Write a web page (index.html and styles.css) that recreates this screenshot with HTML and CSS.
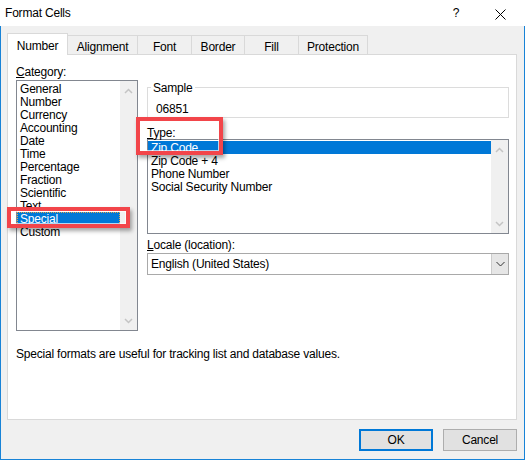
FILE: index.html
```html
<!DOCTYPE html>
<html>
<head>
<meta charset="utf-8">
<title>Format Cells</title>
<link rel="stylesheet" href="styles.css">
</head>
<body>
<div class="window">
  <div class="titlebar">
    <span class="title">Format Cells</span>
    <span class="ctrl help">?</span>
    <span class="ctrl close"><svg width="11" height="11" viewBox="0 0 11 11"><path d="M0.5 0.5 L10.5 10.5 M10.5 0.5 L0.5 10.5" stroke="#000" stroke-width="1" fill="none"/></svg></span>
  </div>
  <div class="body">
    <div class="tabs">
      <div class="tab active tab-number">Number</div>
      <div class="tab tab-alignment">Alignment</div>
      <div class="tab tab-font">Font</div>
      <div class="tab tab-border">Border</div>
      <div class="tab tab-fill">Fill</div>
      <div class="tab tab-protection">Protection</div>
    </div>
    <div class="panel">
      <div class="columns">
        <div class="col-left">
          <div class="label"><u>C</u>ategory:</div>
          <div class="listbox category-list">
            <div class="items">
              <div class="item">General</div>
              <div class="item">Number</div>
              <div class="item">Currency</div>
              <div class="item">Accounting</div>
              <div class="item">Date</div>
              <div class="item">Time</div>
              <div class="item">Percentage</div>
              <div class="item">Fraction</div>
              <div class="item">Scientific</div>
              <div class="item">Text</div>
              <div class="item selected focused">Special</div>
              <div class="item">Custom</div>
            </div>
            <div class="scrollbar">
              <span class="sb-btn"><svg width="9" height="6" viewBox="0 0 9 6"><path d="M1 5 L4.5 1.5 L8 5" stroke="#c4c4c4" stroke-width="1.5" fill="none"/></svg></span>
              <span class="sb-btn"><svg width="9" height="6" viewBox="0 0 9 6"><path d="M1 1 L4.5 4.5 L8 1" stroke="#c4c4c4" stroke-width="1.5" fill="none"/></svg></span>
            </div>
          </div>
        </div>
        <div class="col-right">
          <div class="groupbox">
            <div class="legend">Sample</div>
            <div class="sample-value">06851</div>
          </div>
          <div class="label type-label"><u>T</u>ype:</div>
          <div class="listbox type-list">
            <div class="items">
              <div class="item selected">Zip Code</div>
              <div class="item">Zip Code + 4</div>
              <div class="item">Phone Number</div>
              <div class="item">Social Security Number</div>
            </div>
            <div class="scrollbar">
              <span class="sb-btn"><svg width="9" height="6" viewBox="0 0 9 6"><path d="M1 5 L4.5 1.5 L8 5" stroke="#c4c4c4" stroke-width="1.5" fill="none"/></svg></span>
              <span class="sb-btn"><svg width="9" height="6" viewBox="0 0 9 6"><path d="M1 1 L4.5 4.5 L8 1" stroke="#c4c4c4" stroke-width="1.5" fill="none"/></svg></span>
            </div>
          </div>
          <div class="label locale-label"><u>L</u>ocale (location):</div>
          <div class="combo">
            <span class="combo-text">English (United States)</span>
            <span class="combo-btn"><svg width="9" height="6" viewBox="0 0 9 6"><path d="M0.5 1 L4.5 5 L8.5 1" stroke="#333" stroke-width="1" fill="none"/></svg></span>
          </div>
        </div>
      </div>
      <div class="desc">Special formats are useful for tracking list and database values.</div>
    </div>
    <div class="footer">
      <button class="btn btn-default">OK</button>
      <button class="btn">Cancel</button>
    </div>
  </div>
  <div class="callout callout-special"></div>
  <div class="callout callout-type"></div>
</div>
</body>
</html>
```

FILE: styles.css
```css
* { box-sizing: border-box; }
html, body { margin: 0; padding: 0; background: #fff; }
body {
  font-family: "Liberation Sans", Arial, sans-serif;
  font-size: 12px;
  letter-spacing: -0.2px;
  line-height: 13px;
  color: #000;
}
.window {
  position: relative;
  width: 525px;
  height: 460px;
  display: flex;
  flex-direction: column;
  overflow: hidden;
}
.titlebar {
  height: 26px;
  flex: none;
  display: flex;
  align-items: center;
  background: #fff;
  padding-right: 3px;
}
.title { padding-left: 5px; padding-top: 1px; }
.ctrl { width: 44px; display: flex; justify-content: center; }
.help { margin-left: auto; padding-top: 1px; }
.close svg { display: block; margin-top: 2px; }

.body {
  flex: 1;
  background: #f0f0f0;
  border: 1px solid #1883d7;
  border-top: none;
  padding: 7px 7px 8px 6px;
  display: flex;
  flex-direction: column;
}

.tabs {
  display: flex;
  align-items: flex-end;
  height: 21px;
  flex: none;
}
.tab {
  height: 19px;
  border-top: 1px solid #d9d9d9;
  border-right: 1px solid #d9d9d9;
  background: #f0f0f0;
  text-align: center;
  padding-top: 5px;
}
.tab.active {
  position: relative;
  z-index: 1;
  height: 22px;
  margin-bottom: -1px;
  background: #fff;
  border-left: 1px solid #d9d9d9;
  padding-top: 6px;
}
.tab-number { width: 61px; }
.tab-alignment { width: 70px; }
.tab-font { width: 54px; }
.tab-border { width: 53px; }
.tab-fill { width: 54px; }
.tab-protection { width: 69px; }

.panel {
  flex: none;
  height: 366px;
  background: #fff;
  border: 1px solid #d9d9d9;
  padding: 10px 7px 0 8px;
}
.columns { display: flex; gap: 9px; }
.col-left { width: 122px; flex: none; }
.col-right { flex: 1; padding-top: 22px; }

.label { padding-top: 1px; height: 13px; }

.listbox {
  display: flex;
  border: 1px solid #828790;
  background: #fff;
}
.category-list { height: 251px; margin-top: 2px; }
.type-list { height: 95px; }
.items { flex: 1; padding-top: 1px; }
.item { height: 13px; padding: 1px 0 0 3px; white-space: nowrap; }
.item.selected { background: #0078d7; color: #fff; }
.item.focused { outline: 1px dotted #e7a64a; outline-offset: -1px; }
.scrollbar {
  width: 17px;
  flex: none;
  background: #f0f0f0;
  display: flex;
  flex-direction: column;
  justify-content: space-between;
}
.sb-btn {
  height: 19px;
  display: flex;
  align-items: center;
  justify-content: center;
}
.sb-btn svg { display: block; }

.groupbox {
  height: 31px;
  border: 1px solid #dcdcdc;
  padding-left: 3px;
}
.legend {
  display: table;
  margin-top: -7px;
  padding: 1px 2px 0;
  height: 13px;
  background: #fff;
}
.sample-value { margin-top: 7px; padding: 1px 0 0 5px; }

.type-label { margin-top: 8px; }
.locale-label { margin-top: 5px; padding-top: 0; }

.combo {
  margin-top: 1px;
  height: 22px;
  display: flex;
  align-items: center;
  border: 1px solid #a9a9a9;
  background: #fff;
  padding-left: 3px;
}
.combo-text { flex: 1; padding-top: 1px; }
.combo-btn {
  width: 17px;
  height: 20px;
  background: #e6e6e6;
  border-left: 1px solid #cccccc;
  display: flex;
  align-items: center;
  justify-content: center;
}
.combo-btn svg { display: block; }

.desc { margin-top: 16px; padding-top: 1px; }

.footer {
  display: flex;
  justify-content: flex-end;
  gap: 10px;
  padding-top: 9px;
}
.btn {
  width: 74px;
  height: 22px;
  background: #e1e1e1;
  border: 1px solid #adadad;
  font: inherit;
  letter-spacing: inherit;
  color: #000;
  padding: 1px 0 0;
}
.btn-default { border: 2px solid #0078d7; }

.callout {
  position: absolute;
  border: 4px solid #f2454a;
  box-shadow: 2px 3px 4px rgba(0, 0, 0, 0.35), inset 0 0 0 1px rgba(255, 255, 255, 0.7);
}
.callout-special { left: 7px; top: 207px; width: 123px; height: 21px; }
.callout-type { left: 136px; top: 117px; width: 87px; height: 38px; }
```
